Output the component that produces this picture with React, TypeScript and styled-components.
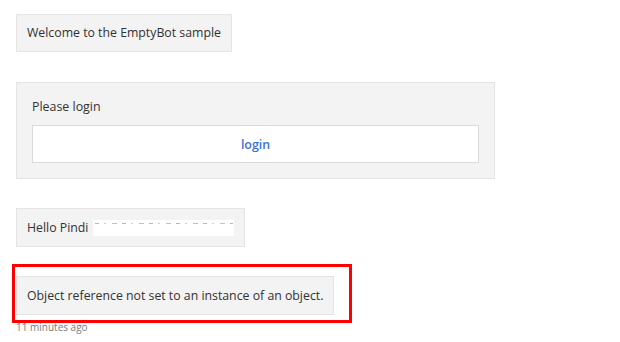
import React from "react";
import styled, { createGlobalStyle } from "styled-components";

const Global = createGlobalStyle`
  html, body { margin: 0; padding: 0; background: #ffffff; }
  body { font-family: "Open Sans", "Noto Sans", sans-serif; color: #323232; }
`;

const Transcript = styled.div`
  display: flex;
  flex-direction: column;
  align-items: flex-start;
  padding: 14px 0 0 16px;
`;

const Bubble = styled.div<{ $mt?: number; $lh?: number; $w?: number }>`
  box-sizing: border-box;
  background: #f3f3f3;
  border: 1px solid #e4e4e4;
  padding: 8px 10px;
  font-size: 12.3px;
  line-height: ${(p) => p.$lh ?? 21}px;
  margin-top: ${(p) => p.$mt ?? 0}px;
  width: ${(p) => (p.$w ? `${p.$w}px` : "auto")};
  display: flex;
  align-items: center;
  white-space: nowrap;
`;

const Card = styled.div`
  box-sizing: border-box;
  width: 479px;
  margin-top: 30px;
  background: #f3f3f3;
  border: 1px solid #e4e4e4;
  padding: 14px 15px 15px;
  display: flex;
  flex-direction: column;
  gap: 8px;
`;

const CardTitle = styled.div`
  font-size: 12.4px;
  line-height: 20px;
`;

const CardButton = styled.div`
  box-sizing: border-box;
  height: 38px;
  background: #ffffff;
  border: 1px solid #dadada;
  display: flex;
  align-items: center;
  justify-content: center;
  color: #3c6fd6;
  font-weight: 600;
  font-size: 12.4px;
`;

const Redacted = styled.span`
  display: block;
  width: 143px;
  height: 16px;
  margin-left: 5px;
  border-radius: 1px;
  background:
    repeating-linear-gradient(
      90deg,
      #b8b8b8 0 4px,
      transparent 4px 9px,
      #cfcfcf 9px 11px,
      transparent 11px 17px,
      #c2c2c2 17px 22px,
      transparent 22px 27px
    ) 2px 3px / 138px 1px no-repeat,
    #ffffff;
`;

const Highlighted = styled.div`
  position: relative;
  margin-top: 29px;
  display: flex;
  flex-direction: column;
  align-items: flex-start;
`;

const Annotation = styled.div`
  position: absolute;
  left: -4px;
  top: -12px;
  width: 340px;
  height: 59px;
  box-sizing: border-box;
  border: 3px solid #ff0000;
  pointer-events: none;
`;

const Timestamp = styled.div`
  font-size: 10px;
  line-height: 14px;
  color: #7a7a7a;
  margin-top: 5px;
`;

export default function App() {
  return (
    <>
      <Global />
      <Transcript>
        <Bubble $lh={20}>Welcome to the EmptyBot sample</Bubble>
        <Card>
          <CardTitle>Please login</CardTitle>
          <CardButton>login</CardButton>
        </Card>
        <Bubble $mt={29} $w={229}>
          Hello Pindi
          <Redacted />
        </Bubble>
        <Highlighted>
          <Bubble>Object reference not set to an instance of an object.</Bubble>
          <Timestamp>11 minutes ago</Timestamp>
          <Annotation />
        </Highlighted>
      </Transcript>
    </>
  );
}
